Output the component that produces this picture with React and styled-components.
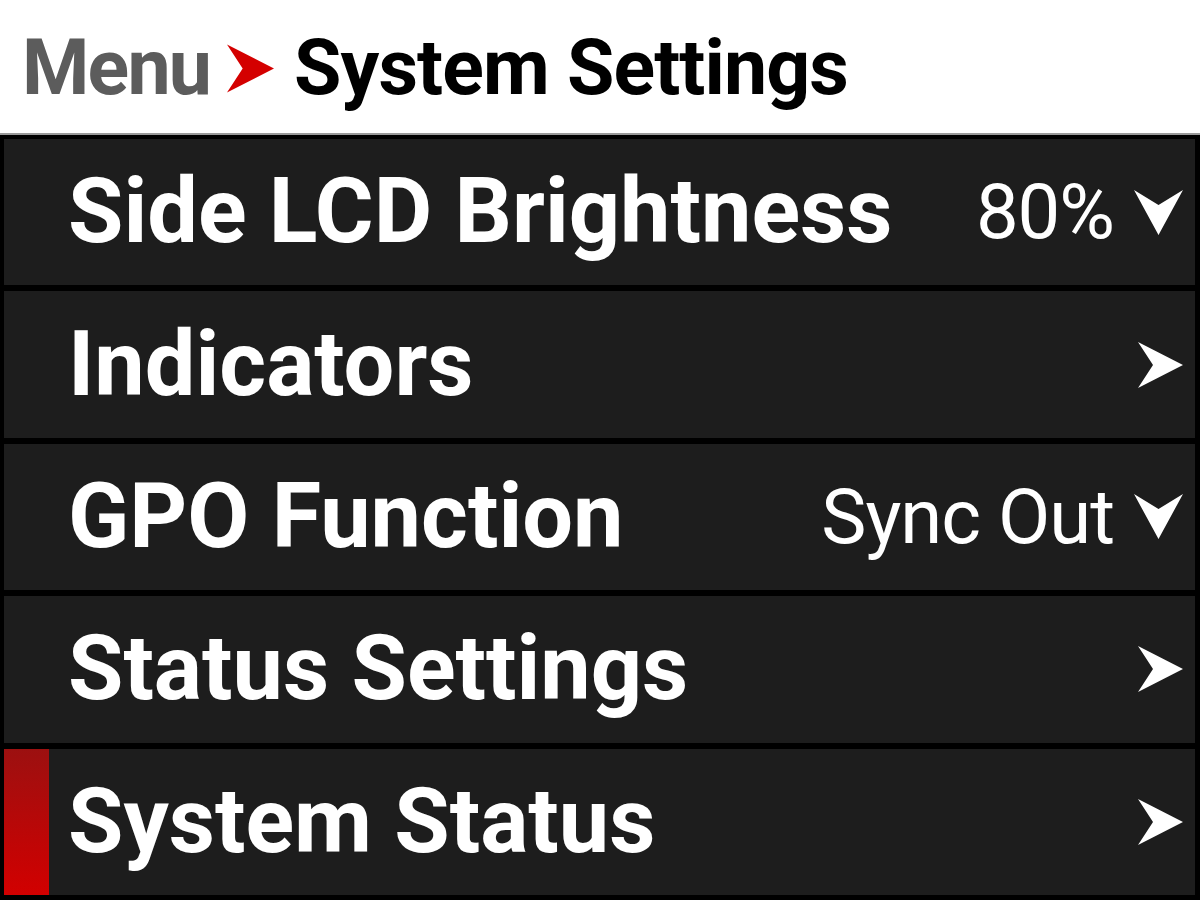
import React from 'react'
import styled, { createGlobalStyle } from 'styled-components'

const GlobalStyle = createGlobalStyle`
  html, body {
    margin: 0;
    padding: 0;
    background: #ffffff;
    overflow: hidden;
  }
  body {
    font-family: Roboto, "Liberation Sans", sans-serif;
  }
`;

const items = [
  { label: 'Side LCD Brightness', value: '80%', kind: 'select' },
  { label: 'Indicators', kind: 'link' },
  { label: 'GPO Function', value: 'Sync Out', kind: 'select' },
  { label: 'Status Settings', kind: 'link' },
  { label: 'System Status', kind: 'link', active: true },
]

const ChevronRight = ({ color = '#ffffff', width = 45, height = 46 }) => (
  <svg width={width} height={height} viewBox="0 0 45 46">
    <path d="M0 0 L45 23 L0 46 L15 23 Z" fill={color} />
  </svg>
)

const ChevronDown = () => (
  <svg width="49" height="45" viewBox="0 0 49 45">
    <path d="M0 0 L24.5 15 L49 0 L24.5 45 Z" fill="#ffffff" />
  </svg>
)

const App = () => {
  return (
    <Screen>
      <GlobalStyle />
      <Header>
        <Crumb>Menu</Crumb>
        <CrumbArrow>
          <ChevronRight color="#d40000" width={47} height={49} />
        </CrumbArrow>
        <Title>System Settings</Title>
      </Header>
      <Panel>
        {items.map(item => (
          <Row key={item.label}>
            {item.active && <Marker />}
            <Label>{item.label}</Label>
            <Right>
              {item.value && <Value>{item.value}</Value>}
              {item.kind === 'select' ? <ChevronDown /> : <ChevronRight />}
            </Right>
          </Row>
        ))}
      </Panel>
    </Screen>
  )
}

const Screen = styled.div`
  width: 1200px;
  height: 900px;
  display: flex;
  flex-direction: column;
  background: #ffffff;
`;

const Header = styled.div`
  height: 135px;
  display: flex;
  align-items: center;
  padding: 3px 0 0 22px;
  box-sizing: border-box;
  border-bottom: 2px solid #9a9a9a;
`;

const Crumb = styled.span`
  color: #5c5c5c;
  font-size: 77px;
  font-weight: 700;
  line-height: 1;
  letter-spacing: -1.8px;
`;

const CrumbArrow = styled.span`
  display: flex;
  margin: 0 20px 0 17px;
`;

const Title = styled.span`
  color: #000000;
  font-size: 77px;
  font-weight: 700;
  line-height: 1;
  letter-spacing: -0.9px;
`;

const Panel = styled.div`
  flex: 1;
  background: #000000;
  display: grid;
  grid-template-rows: repeat(5, 1fr);
  gap: 6px;
  padding: 4px 5px 5px 4px;
`;

const Row = styled.div`
  position: relative;
  background: #1d1d1d;
  display: flex;
  align-items: center;
  justify-content: space-between;
  padding: 0 12px 0 64px;
`;

const Marker = styled.div`
  position: absolute;
  left: 0;
  top: 0;
  bottom: 0;
  width: 45px;
  background: linear-gradient(180deg, #9c1010 0%, #d20000 100%);
`;

const Label = styled.span`
  color: #ffffff;
  font-size: 90px;
  font-weight: 700;
  line-height: 1;
`;

const Right = styled.div`
  display: flex;
  align-items: center;
  gap: 20px;
`;

const Value = styled.span`
  color: #ffffff;
  font-size: 76px;
  font-weight: 400;
  line-height: 1;
  letter-spacing: -1px;
`;

export default App
